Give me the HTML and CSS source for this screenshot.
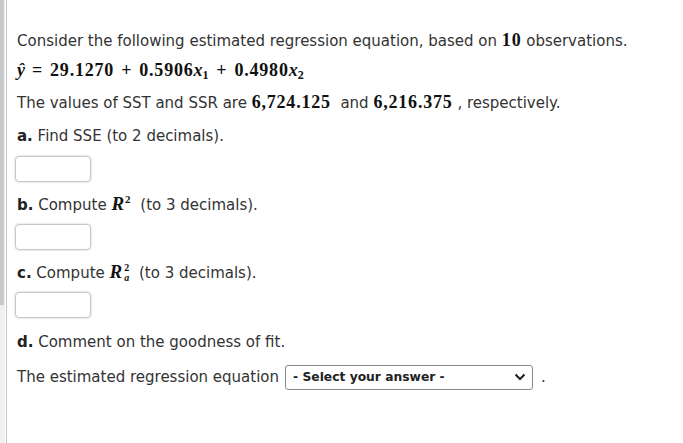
FILE: index.html
```html
<!DOCTYPE html>
<html>
<head>
<meta charset="utf-8">
<link rel="stylesheet" href="styles.css">
</head>
<body>
<div class="rail"><div class="thumb"></div></div>
<div class="content">
  <div class="row r1">Consider the following estimated regression equation, based on <span class="num">10</span> observations.</div>
  <div class="row r2 math"><span class="mi">ŷ</span><span class="op">=</span>29.1270<span class="op">+</span>0.5906<span class="mi">x</span><sub>1</sub><span class="op">+</span>0.4980<span class="mi">x</span><sub>2</sub></div>
  <div class="row r3">The values of SST and SSR are <span class="num">6,724.125</span>&nbsp; and <span class="num">6,216.375</span> , respectively.</div>
  <div class="row r4"><b>a.</b> Find SSE (to 2 decimals).</div>
  <div class="box"></div>
  <div class="row r5"><b>b.</b> Compute <span class="rsym">R<sup>2</sup></span> (to 3 decimals).</div>
  <div class="box"></div>
  <div class="row r5"><b>c.</b> Compute <span class="rsym">R<span class="supsub"><span>2</span><span class="a">a</span></span></span> (to 3 decimals).</div>
  <div class="box"></div>
  <div class="row r6"><b>d.</b> Comment on the goodness of fit.</div>
  <div class="final">
    <span>The estimated regression equation</span>
    <div class="select"><span>- Select your answer -</span>
      <svg width="12" height="8" viewBox="0 0 12 8"><path d="M1.5 1.5 L6 6 L10.5 1.5" fill="none" stroke="#222" stroke-width="2"/></svg>
    </div>
    <span class="dot">.</span>
  </div>
</div>
</body>
</html>
```
FILE: styles.css
```css
html, body {
  margin: 0;
  padding: 0;
  background: #fff;
}
body {
  display: flex;
  min-height: 443px;
  font-family: "DejaVu Sans", Verdana, sans-serif;
  font-size: 15px;
  color: #333;
}
.rail {
  width: 5px;
  background: #f0f0f0;
  margin-right: 1px;
  flex: none;
}
.thumb {
  width: 4px;
  height: 305px;
  background: #c8c8c8;
}
.content {
  border-left: 1px solid #c4c4c4;
  padding: 30px 10px 0 10px;
  flex: 1;
}
.row {
  line-height: 20px;
  height: 20px;
  white-space: nowrap;
}
.r2 { margin-top: 10px; }
.r3 { margin-top: 12px; }
.r4 { margin-top: 14px; }
.r5 { margin-top: 12px; }
.r6 { margin-top: 14px; }
b { color: #222; }
.num, .math {
  font-family: "Liberation Serif", "Times New Roman", serif;
  font-weight: bold;
  font-size: 18px;
  letter-spacing: 0.8px;
  color: #111;
}
.op { margin: 0 7px; }
.mi { font-style: italic; letter-spacing: 0; }
.math sub { font-size: 12px; vertical-align: -3px; line-height: 0; }
.rsym {
  font-family: "Liberation Serif", serif;
  font-weight: bold;
  font-style: italic;
  font-size: 19px;
  color: #111;
  margin-right: 5px;
}
.rsym sup { font-size: 11px; font-style: normal; vertical-align: 7px; line-height: 0; margin-left: 1px; }
.supsub {
  display: inline-flex;
  flex-direction: column;
  font-size: 10px;
  line-height: 10px;
  vertical-align: 7px;
  margin-left: 2px;
}
.supsub span { font-style: normal; }
.supsub .a { font-style: italic; }
.box {
  width: 74px;
  height: 24px;
  margin-top: 10px;
  margin-left: -2px;
  border: 1px solid #c8c8c8;
  border-radius: 4px;
  box-shadow: 0 0 2px rgba(0,0,0,0.25);
}
.final {
  margin-top: 12px;
  display: flex;
  align-items: center;
  gap: 6px;
  height: 26px;
}
.select {
  width: 248px;
  height: 25px;
  border: 1px solid #8a8a8a;
  border-radius: 3px;
  display: flex;
  align-items: center;
  justify-content: space-between;
  padding: 0 6px 0 7px;
  box-sizing: border-box;
  font-size: 12.3px;
  font-weight: bold;
  color: #222;
}
.dot { margin-left: 2px; }
```
